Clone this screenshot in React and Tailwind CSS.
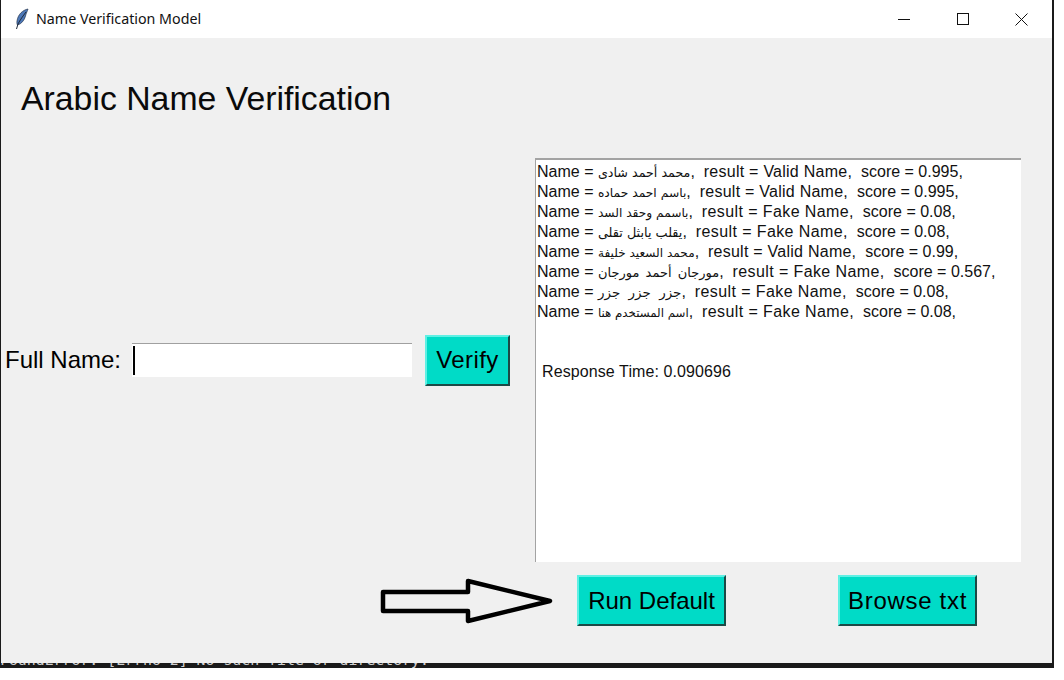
import React from "react";

const rows = [
  { name: "محمد أحمد شادى", cls: "text-[12.7px]", result: "Valid Name", track: "tracking-[0.25px]", score: "0.995" },
  { name: "باسم احمد حماده", cls: "text-[12.3px]", result: "Valid Name", track: "tracking-[0.25px]", score: "0.995" },
  { name: "باسمم وحقد السد", cls: "text-[12.2px]", result: "Fake Name", track: "tracking-[0.4px]", score: "0.08" },
  { name: "يقلب يابثل تقلى", cls: "text-[12.8px]", result: "Fake Name", track: "tracking-[0.4px]", score: "0.08" },
  { name: "محمد السعيد خليفة", cls: "text-[12.1px]", result: "Valid Name", track: "tracking-[0.25px]", score: "0.99" },
  { name: "مورجان أحمد مورجان", cls: "text-[13px] [word-spacing:2px]", result: "Fake Name", track: "tracking-[0.4px]", score: "0.567" },
  { name: "جزر جزر جزر", cls: "text-[13.5px] [word-spacing:4px]", result: "Fake Name", track: "tracking-[0.4px]", score: "0.08" },
  { name: "اسم المستخدم هنا", cls: "text-[11.8px]", result: "Fake Name", track: "tracking-[0.4px]", score: "0.08" },
];

const btn =
  "h-[51px] bg-[#00dbc7] border-2 border-t-[#5ff0e4] border-l-[#5ff0e4] border-r-[#1c4a46] border-b-[#1c4a46] text-[24px] leading-none text-black";

const Feather = () => (
  <svg width="14" height="22" viewBox="0 0 14 22">
    <path d="M13 1C8 2 3 6 2 13c-.3 2 0 3 .5 4 4-1 7-5 8-9 .6-3 2-5 2.500-7z" fill="#4d78b8" stroke="#27364f" strokeWidth="0.7" />
    <path d="M11 4C8 8 5 12 3 16L1.500 21" fill="none" stroke="#1f2a3a" strokeWidth="1" />
  </svg>
);

const App = () => {
  return (
    <div className="h-screen w-screen bg-white overflow-hidden font-['Liberation_Sans',Arial,sans-serif]">
      <div className="w-[1054px] h-[663px] border-l border-r-2 border-[#1a1a1a] flex flex-col">
        {/* Title bar */}
        <div className="h-[38px] bg-white flex items-center shrink-0">
          <div className="ml-[14px] w-[21px] flex"><Feather /></div>
          <span className="font-['Noto_Sans',sans-serif] text-[14.25px] text-[#111]">Name Verification Model</span>
          <div className="ml-auto mr-[2px] flex items-center">
            <div className="w-[58px] flex justify-center">
              <svg width="12" height="12" viewBox="0 0 12 12"><path d="M0 6.500h12" stroke="#111" strokeWidth="1" /></svg>
            </div>
            <div className="w-[59px] flex justify-center">
              <svg width="12" height="12" viewBox="0 0 12 12"><rect x="0.500" y="0.500" width="11" height="11" fill="none" stroke="#111" strokeWidth="1" /></svg>
            </div>
            <div className="w-[58px] flex justify-center">
              <svg width="13" height="13" viewBox="0 0 13 13"><path d="M.5.500l12 12M12.500.500l-12 12" stroke="#111" strokeWidth="1" /></svg>
            </div>
          </div>
        </div>

        <div className="flex-1 bg-[#f0f0f0] flex flex-col">
          <div className="h-[120px] pl-[20px] pt-[38px]">
            <h1 className="text-[33.8px] leading-[44px] text-[#0a0a0a]">Arabic Name Verification</h1>
          </div>

          <div className="flex">
            <div className="w-[534px] flex items-center pl-[4px]">
              <span className="text-[24px] text-black w-[127px]">Full Name:</span>
              <div className="w-[280px] h-[34px] bg-white border-t border-[#a0a0a0] pl-[1px] pt-[2px]">
                <div className="w-[2px] h-[29px] bg-black"></div>
              </div>
              <button className={`${btn} ml-[13px] w-[85px] tracking-[0.4px]`}>Verify</button>
            </div>
            <div className="w-[486px] h-[404px] bg-white border-t-2 border-l border-[#a3a3a3] pl-[1px] pt-[2px] text-[16px] leading-[20px] text-[#111] whitespace-pre overflow-hidden">
              {rows.map((r) => (
                <div key={r.name} className="h-[20px]">
                  Name = <span className={`font-['DejaVu_Sans',sans-serif] leading-none ${r.cls}`}>{r.name}</span>,  <span className={r.track}>result = {r.result},</span>  score = {r.score},
                </div>
              ))}
              <div className="h-[40px]"></div>
              <div className="pl-[5px] tracking-[0.1px]">Response Time: 0.090696</div>
            </div>
          </div>

          <div className="flex items-start pt-[13px]">
            <svg className="ml-[379px] mt-[3px]" width="176" height="46" viewBox="0 0 176 46">
              <path d="M3 14h85V3l82 20-82 20V33H3z" fill="none" stroke="#000" strokeWidth="4.500" strokeLinejoin="round" />
            </svg>
            <button className={`${btn} ml-[21px] w-[149px]`}>Run Default</button>
            <button className={`${btn} ml-[112px] w-[139px] tracking-[0.7px]`}>Browse txt</button>
          </div>
        </div>
      </div>

      {/* console behind the window */}
      <div className="w-[1054px] h-[5px] bg-[#1a1a1a] overflow-hidden">
        <div className="mt-[-11px] font-['DejaVu_Sans_Mono',monospace] text-[14.85px] leading-[16px] text-[#d0d0d0] whitespace-pre">FoundError: [Errno 2] No such file or directory:</div>
      </div>
    </div>
  );
};

export default App;
